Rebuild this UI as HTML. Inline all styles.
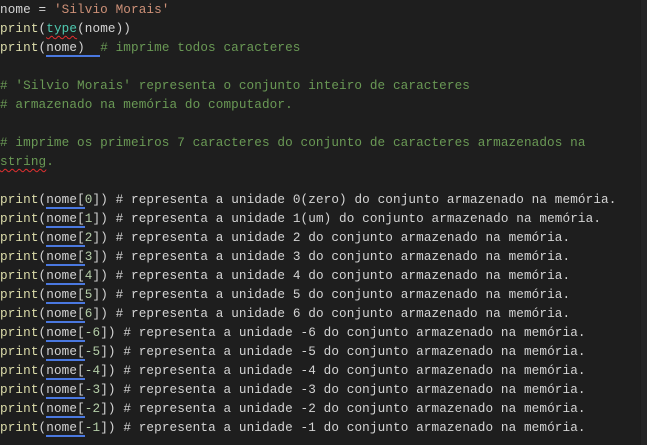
<!DOCTYPE html>
<html><head><meta charset="utf-8"><style>
html,body{margin:0;padding:0;background:#1e1e1e;width:647px;height:445px;overflow:hidden}
.w{position:absolute;left:0;top:0;width:641px;height:445px;background:#1e1e1e}
.s{position:absolute;right:0;top:0;width:6px;height:445px;background:#252526}
pre{margin:0;padding:0;font-family:"Liberation Mono",monospace;font-size:12.67px;letter-spacing:0.11px;line-height:19px;color:#d4d4d4;white-space:pre}
.f{color:#dcdcaa}.t{color:#4ec9b0}.st{color:#ce9178}.c{color:#6a9955}.n{color:#b5cea8}
.u{border-bottom:2px solid #4a78e0}
.r{text-decoration:underline wavy #e03030;text-decoration-thickness:1px;text-underline-offset:3px}
</style></head><body><div class="w"><pre>nome = <span class="st">'Silvio Morais'</span>
<span class="f">print</span>(<span class="t r">type</span>(nome))
<span class="f">print</span>(<span class="u">nome)  </span><span class="c"># imprime todos caracteres</span>

<span class="c"># 'Silvio Morais' representa o conjunto inteiro de caracteres</span>
<span class="c"># armazenado na memória do computador.</span>

<span class="c"># imprime os primeiros 7 caracteres do conjunto de caracteres armazenados na</span>
<span class="c"><span class="r">string</span>.</span>

<span class="f">print</span>(<span class="u">nome[</span><span class="n">0</span>]) # representa a unidade 0(zero) do conjunto armazenado na memória.
<span class="f">print</span>(<span class="u">nome[</span><span class="n">1</span>]) # representa a unidade 1(um) do conjunto armazenado na memória.
<span class="f">print</span>(<span class="u">nome[</span><span class="n">2</span>]) # representa a unidade 2 do conjunto armazenado na memória.
<span class="f">print</span>(<span class="u">nome[</span><span class="n">3</span>]) # representa a unidade 3 do conjunto armazenado na memória.
<span class="f">print</span>(<span class="u">nome[</span><span class="n">4</span>]) # representa a unidade 4 do conjunto armazenado na memória.
<span class="f">print</span>(<span class="u">nome[</span><span class="n">5</span>]) # representa a unidade 5 do conjunto armazenado na memória.
<span class="f">print</span>(<span class="u">nome[</span><span class="n">6</span>]) # representa a unidade 6 do conjunto armazenado na memória.
<span class="f">print</span>(<span class="u">nome[</span><span class="n">-6</span>]) # representa a unidade -6 do conjunto armazenado na memória.
<span class="f">print</span>(<span class="u">nome[</span><span class="n">-5</span>]) # representa a unidade -5 do conjunto armazenado na memória.
<span class="f">print</span>(<span class="u">nome[</span><span class="n">-4</span>]) # representa a unidade -4 do conjunto armazenado na memória.
<span class="f">print</span>(<span class="u">nome[</span><span class="n">-3</span>]) # representa a unidade -3 do conjunto armazenado na memória.
<span class="f">print</span>(<span class="u">nome[</span><span class="n">-2</span>]) # representa a unidade -2 do conjunto armazenado na memória.
<span class="f">print</span>(<span class="u">nome[</span><span class="n">-1</span>]) # representa a unidade -1 do conjunto armazenado na memória.</pre></div><div class="s"></div></body></html>
